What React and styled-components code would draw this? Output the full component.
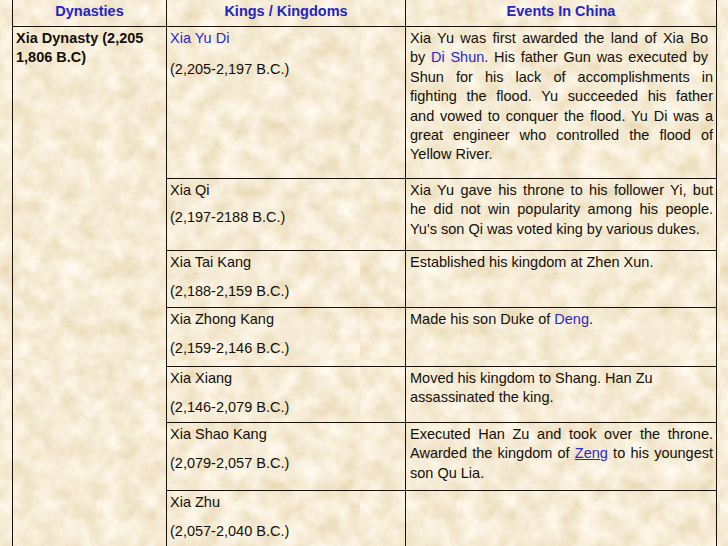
import React from 'react';
import styled, { createGlobalStyle } from 'styled-components';

const parchment =
  "<svg xmlns='http://www.w3.org/2000/svg' width='360' height='360'>" +
  "<filter id='n'><feTurbulence type='fractalNoise' baseFrequency='0.05' numOctaves='5' seed='7'/>" +
  "<feColorMatrix values='0.26 0 0 0 0.79  0.36 0 0 0 0.655  0.56 0 0 0 0.39  0 0 0 0 1'/></filter>" +
  "<rect width='100%' height='100%' filter='url(#n)'/></svg>";

const GlobalStyle = createGlobalStyle`
  html, body {
    margin: 0;
    padding: 0;
  }
  body {
    background-color: #ead6ab;
    background-image: url("data:image/svg+xml,${encodeURIComponent(parchment)}");
    font-family: "Liberation Sans", Arial, sans-serif;
    color: #141008;
    overflow: hidden;
  }
`;

const Page = styled.div`
  width: 728px;
  height: 546px;
  overflow: hidden;
`;

const Table = styled.table`
  margin: -1px 0 0 12px;
  width: 704px;
  border-collapse: collapse;
  table-layout: fixed;
  font-size: 14.5px;
  line-height: 19.4px;
`;

const Row = styled.tr`
  height: ${(p) => p.h}px;
`;

const Head = styled.th`
  border: 1px solid #1b140a;
  padding: 2px 3px 0;
  vertical-align: top;
  text-align: center;
  font-weight: bold;
  color: #2424c4;
`;

const Cell = styled.td`
  border: 1px solid #1b140a;
  padding: 2px 3px 0 ${(p) => (p.wide ? 4 : 3)}px;
  vertical-align: top;
  font-weight: ${(p) => (p.bold ? 'bold' : 'normal')};
`;

const KingName = styled.div`
  color: ${(p) => (p.link ? '#2a2acc' : 'inherit')};
`;

const Dates = styled.div`
  margin-top: ${(p) => p.gap}px;
`;

// one printed line of an event; all but the last are justified edge to edge
const Line = styled.div`
  text-align: ${(p) => (p.justify ? 'justify' : 'left')};
  text-align-last: ${(p) => (p.justify ? 'justify' : 'auto')};
  padding-right: ${(p) => p.short || 0}px;
`;

const Link = styled.span`
  color: #2a2acc;
  text-decoration: ${(p) => (p.underline ? 'underline' : 'none')};
`;

const kings = [
  {
    name: 'Xia Yu Di',
    link: true,
    dates: '(2,205-2,197 B.C.)',
    gap: 11.5,
    h: 152,
    justify: true,
    lines: [
      { text: 'Xia Yu was first awarded the land of Xia Bo', short: 5 },
      {
        text: (
          <>
            by <Link>Di Shun</Link>. His father Gun was executed by
          </>
        ),
        short: 5,
      },
      { text: 'Shun for his lack of accomplishments in' },
      { text: 'fighting the flood. Yu succeeded his father' },
      { text: 'and vowed to conquer the flood. Yu Di was a' },
      { text: 'great engineer who controlled the flood of' },
      { text: 'Yellow River.' },
    ],
  },
  {
    name: 'Xia Qi',
    dates: '(2,197-2188 B.C.)',
    gap: 7.5,
    h: 72,
    justify: true,
    lines: [
      { text: 'Xia Yu gave his throne to his follower Yi, but' },
      { text: 'he did not win popularity among his people.' },
      { text: "Yu's son Qi was voted king by various dukes." },
    ],
  },
  {
    name: 'Xia Tai Kang',
    dates: '(2,188-2,159 B.C.)',
    gap: 10,
    h: 57,
    lines: [{ text: 'Established his kingdom at Zhen Xun.' }],
  },
  {
    name: 'Xia Zhong Kang',
    dates: '(2,159-2,146 B.C.)',
    gap: 10,
    h: 59,
    lines: [
      {
        text: (
          <>
            Made his son Duke of <Link>Deng</Link>.
          </>
        ),
      },
    ],
  },
  {
    name: 'Xia Xiang',
    dates: '(2,146-2,079 B.C.)',
    gap: 10,
    h: 56,
    lines: [{ text: 'Moved his kingdom to Shang. Han Zu' }, { text: 'assassinated the king.' }],
  },
  {
    name: 'Xia Shao Kang',
    dates: '(2,079-2,057 B.C.)',
    gap: 10,
    h: 68,
    justify: true,
    lines: [
      { text: 'Executed Han Zu and took over the throne.' },
      {
        text: (
          <>
            Awarded the kingdom of <Link underline>Zeng</Link> to his youngest
          </>
        ),
      },
      { text: 'son Qu Lia.' },
    ],
  },
  {
    name: 'Xia Zhu',
    dates: '(2,057-2,040 B.C.)',
    gap: 10,
    h: 70,
    lines: [],
  },
];

function App() {
  return (
    <Page>
      <GlobalStyle />
      <Table>
        <colgroup>
          <col style={{ width: 154 }} />
          <col style={{ width: 239 }} />
          <col style={{ width: 311 }} />
        </colgroup>
        <thead>
          <Row h={27}>
            <Head>Dynasties</Head>
            <Head>Kings / Kingdoms</Head>
            <Head>Events In China</Head>
          </Row>
        </thead>
        <tbody>
          {kings.map((k, i) => (
            <Row key={k.name} h={k.h}>
              {i === 0 && (
                <Cell bold rowSpan={kings.length}>
                  Xia Dynasty (2,205 1,806 B.C)
                </Cell>
              )}
              <Cell>
                <KingName link={k.link}>{k.name}</KingName>
                <Dates gap={k.gap}>{k.dates}</Dates>
              </Cell>
              <Cell wide>
                {k.lines.map((l, j) => (
                  <Line
                    key={j}
                    justify={k.justify && j < k.lines.length - 1}
                    short={l.short}
                  >
                    {l.text}
                  </Line>
                ))}
              </Cell>
            </Row>
          ))}
        </tbody>
      </Table>
    </Page>
  );
}

export default App;
